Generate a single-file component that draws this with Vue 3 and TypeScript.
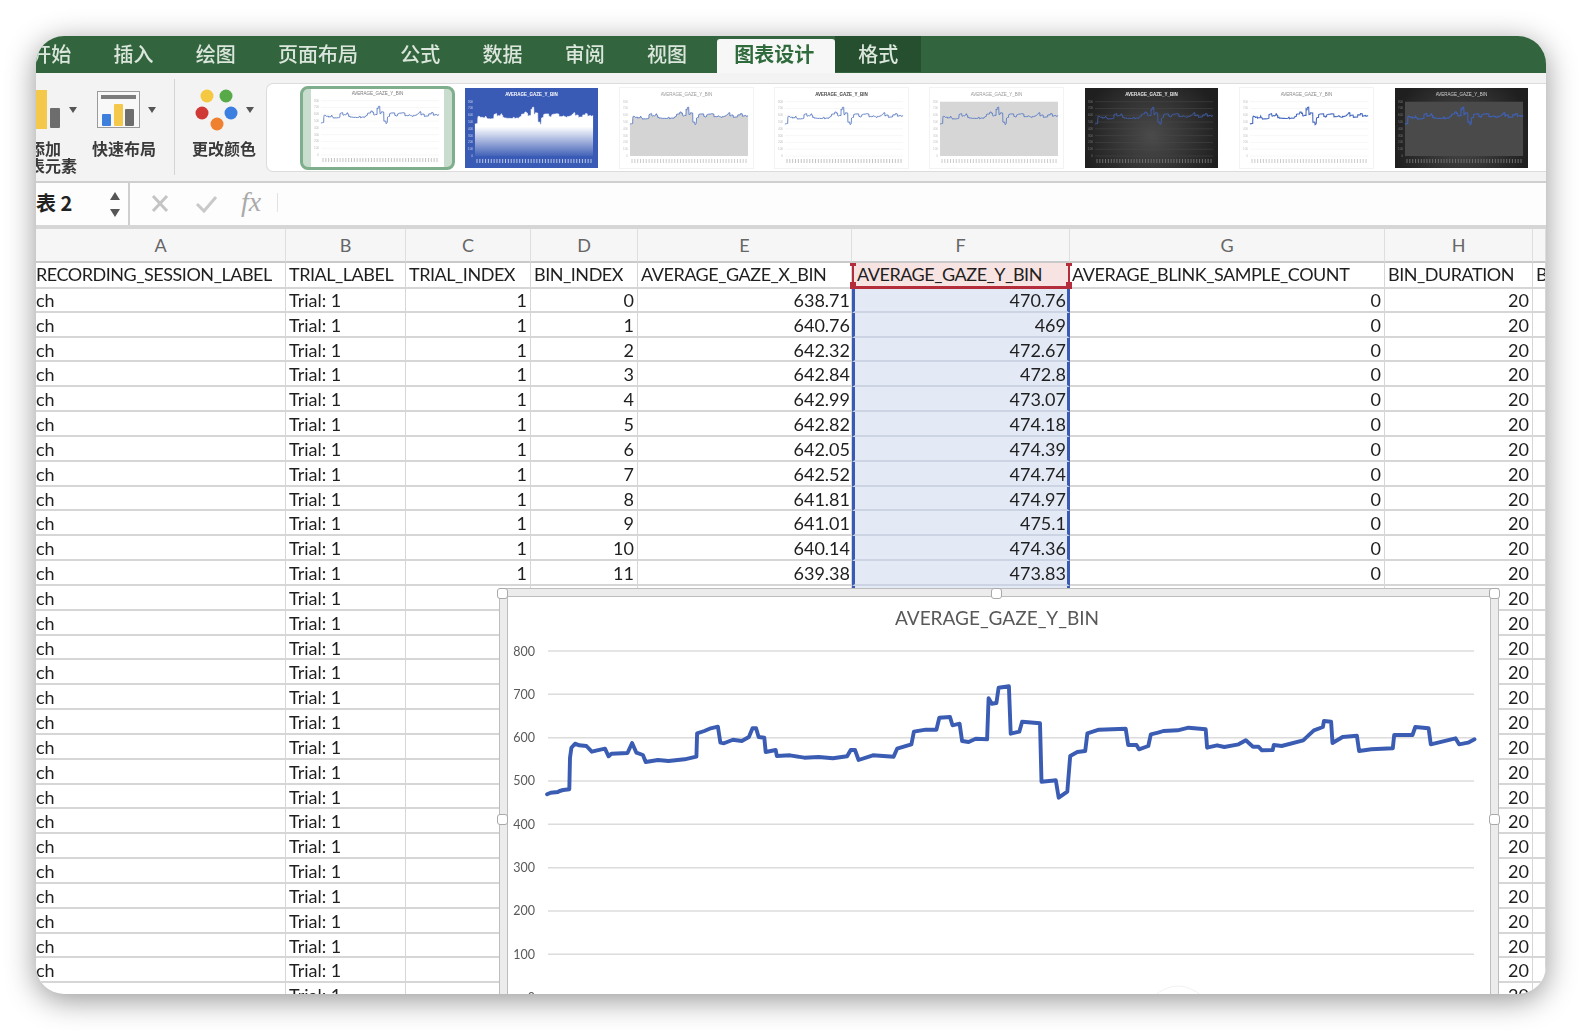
<script setup lang="ts">
type Pt = [number, number]

const tabs = ['开始', '插入', '绘图', '页面布局', '公式', '数据', '审阅', '视图']

const left: Pt[] = [[160,670],[170,665],[190,663],[195,660],[205,657],[222,655],[224,560],[228,530],[238,518],[250,523],[270,525],[285,542],[300,538],[322,533],[332,556],[340,548],[385,546],[398,516],[410,545],[428,552],[436,573],[470,567],[500,570],[545,565],[578,557],[580,487],[600,480],[615,473],[638,467],[645,515],[655,517],[680,506],[705,510],[725,498],[735,472],[745,472],[752,498],[768,500],[772,543],[800,537],[803,555],[840,553],[880,560],[920,558],[960,562],[1000,556],[1010,537],[1022,537],[1032,567],[1072,553],[1130,557],[1140,533],[1180,520],[1187,482],[1220,476],[1250,476],[1258,440],[1288,438],[1295,463],[1315,458],[1322,510],[1340,513],[1360,503],[1392,505],[1396,382],[1405,398],[1418,396],[1424,350],[1453,346],[1458,488],[1482,482],[1490,452],[1540,457]]
const right: Pt[] = [[60,632],[100,628],[108,680],[132,662],[140,555],[160,543],[182,540],[188,487],[220,476],[295,473],[302,522],[325,522],[332,535],[358,525],[365,490],[385,485],[400,480],[440,478],[470,470],[518,475],[522,530],[550,523],[570,528],[610,520],[630,508],[650,527],[665,527],[675,538],[705,537],[708,522],[730,525],[790,508],[820,478],[845,468],[848,450],[868,452],[872,516],[900,498],[940,494],[946,540],[980,535],[1040,532],[1044,492],[1095,492],[1103,468],[1140,472],[1146,520],[1215,502],[1225,520],[1250,515],[1268,505]]

// Page coordinates of the series
const series: Pt[] = [
  ...left.map(([x, y]): Pt => [490 + x / 2.8, 570 + y / 3]),
  ...right.map(([x, y]): Pt => [1020 + x / 2.79, 570 + y / 3]),
]
const toStr = (p: Pt[]) => p.map(([x, y]) => `${x.toFixed(1)},${y.toFixed(1)}`).join(' ')

const chartLine = toStr(series.map(([x, y]): Pt => [x - 507, y - 595]))
const thumbPts: Pt[] = series.map(([x, y]): Pt => [10 + ((x - 548) / 926) * 118, 13.7 + ((y - 650) / 346.7) * 54.3])
const thumbLine = toStr(thumbPts)
const thumbArea = `10,68 ${thumbLine} 128,68`

const axis = [800, 700, 600, 500, 400, 300, 200, 100, 0]
const axisY = (v: number) => 650 + ((800 - v) / 100) * 43.33 - 595
const thumbY = (v: number) => 13.7 + ((800 - v) / 800) * 54.3
const ticks = Array.from({ length: 41 }, (_, i) => 12 + i * 2.85)

interface Thumb {
  cls: string
  title: string
  weight: number
  text: string
  grid: string
  line: string
  lineW: number
  area?: string
  plot?: string
}
const thumbs: Thumb[] = [
  { cls: 'th-sel', title: '#777', weight: 400, text: '#bbb', grid: '#eee', line: '#5b7cc4', lineW: 0.9 },
  { cls: 'th-blue', title: '#fff', weight: 700, text: '#c9d4f0', grid: 'transparent', line: '#fff', lineW: 0.6, area: 'url(#fade)' },
  { cls: 'th-plain', title: '#999', weight: 400, text: '#c4c4c4', grid: 'transparent', line: '#5b7cc4', lineW: 0.9, area: '#d4d4d4' },
  { cls: 'th-plain', title: '#444', weight: 700, text: '#bbb', grid: '#eee', line: '#5b7cc4', lineW: 0.9 },
  { cls: 'th-plain', title: '#999', weight: 400, text: '#c4c4c4', grid: 'transparent', line: '#5b7cc4', lineW: 0.9, plot: '#d6d6d6' },
  { cls: 'th-dark', title: '#e8e8e8', weight: 700, text: '#777', grid: '#4a4a4a', line: '#3f5fb0', lineW: 0.9 },
  { cls: 'th-plain', title: '#888', weight: 400, text: '#c4c4c4', grid: '#eee', line: '#4a6cc0', lineW: 1.1 },
  { cls: 'th-dark', title: '#cfcfcf', weight: 400, text: '#777', grid: 'transparent', line: '#3f5fb0', lineW: 1.2, plot: '#4a4a4a' },
]

const columns = ['A', 'B', 'C', 'D', 'E', 'F', 'G', 'H', '']
const headers = ['RECORDING_SESSION_LABEL', 'TRIAL_LABEL', 'TRIAL_INDEX', 'BIN_INDEX', 'AVERAGE_GAZE_X_BIN', 'AVERAGE_GAZE_Y_BIN', 'AVERAGE_BLINK_SAMPLE_COUNT', 'BIN_DURATION', 'BIN_START']
const xVals = ['638.71', '640.76', '642.32', '642.84', '642.99', '642.82', '642.05', '642.52', '641.81', '641.01', '640.14', '639.38']
const yVals = ['470.76', '469', '472.67', '472.8', '473.07', '474.18', '474.39', '474.74', '474.97', '475.1', '474.36', '473.83']
const rows = Array.from({ length: 29 }, (_, i) => {
  const known = i < 12
  return [
    'ch',
    'Trial: 1',
    known ? '1' : '',
    known ? String(i) : '',
    known ? xVals[i] : '',
    known ? yVals[i] : '',
    known ? '0' : '',
    '20',
    '',
  ]
})
const colClass = (c: number) => `c${c}`
</script>

<template>
  <div class="page">
    <div class="win">
      <nav class="tabs">
        <span v-for="t in tabs" :key="t" class="tab">{{ t }}</span>
        <span class="tab active">图表设计</span>
        <span class="tab format">格式</span>
      </nav>

      <section class="ribbon">
        <div class="rb add">
          <svg class="rb-icon" width="64" height="44" viewBox="0 0 64 44">
            <rect x="-6" y="3" width="17" height="39" fill="#f4c84a" />
            <rect x="14" y="21" width="10" height="20" rx="1" fill="#6d6d6d" />
            <polygon points="33,20 41,20 37,26" fill="#555" />
          </svg>
          <span class="rb-label">添加<br />图表元素</span>
        </div>
        <div class="rb quick">
          <svg class="rb-icon" width="66" height="44" viewBox="0 0 66 44">
            <rect x="5.5" y="4.5" width="42" height="36" fill="#f8f8f8" stroke="#9a9a9a" />
            <rect x="9" y="8" width="35" height="4" fill="#7c7c7c" />
            <rect x="10" y="27" width="9" height="12" rx="1" fill="#3f7fdc" />
            <rect x="22" y="17" width="9" height="22" rx="1" fill="#f4c84a" />
            <rect x="33" y="22" width="9" height="17" rx="1" fill="#6d6d6d" />
            <polygon points="56,20 64,20 60,26" fill="#555" />
          </svg>
          <span class="rb-label">快速布局</span>
        </div>
        <div class="divider"></div>
        <div class="rb colors">
          <svg class="rb-icon" width="66" height="44" viewBox="0 0 66 44">
            <circle cx="16" cy="9" r="6.5" fill="#f5c842" />
            <circle cx="35" cy="9" r="6.5" fill="#58a948" />
            <circle cx="11" cy="26" r="6.5" fill="#cf3a37" />
            <circle cx="40" cy="26" r="6.5" fill="#3b7fe0" />
            <circle cx="26" cy="37" r="6.5" fill="#ee8030" />
            <polygon points="55,20 63,20 59,26" fill="#555" />
          </svg>
          <span class="rb-label">更改颜色</span>
        </div>

        <div class="gallery">
          <div v-for="(t, i) in thumbs" :key="i" class="thumb" :class="t.cls">
            <svg class="th-svg" width="133" height="80" viewBox="0 0 133 80">
              <defs v-if="i === 1">
                <linearGradient id="fade" x1="0" y1="0" x2="0" y2="1">
                  <stop offset="0.4" stop-color="#fff" />
                  <stop offset="1" stop-color="#fff" stop-opacity="0.05" />
                </linearGradient>
              </defs>
              <text x="66.5" y="8" class="th-title" :fill="t.title" :font-weight="t.weight">AVERAGE_GAZE_Y_BIN</text>
              <rect v-if="t.plot" x="10" y="13.7" width="118" height="54.3" :fill="t.plot" />
              <template v-for="v in axis" :key="v">
                <line x1="10" x2="128" :y1="thumbY(v)" :y2="thumbY(v)" :stroke="t.grid" stroke-width="0.5" />
                <text x="8" :y="thumbY(v) + 1" class="th-axis" :fill="t.text">{{ v }}</text>
              </template>
              <polygon v-if="t.area" :points="thumbArea" :fill="t.area" />
              <polyline :points="thumbLine" fill="none" :stroke="t.line" :stroke-width="t.lineW" />
              <line v-for="x in ticks" :key="x" :x1="x" :x2="x" y1="71" y2="75" :stroke="t.text" stroke-width="0.9" />
            </svg>
          </div>
        </div>
      </section>

      <section class="formula">
        <div class="namebox">
          <span>表 2</span>
          <svg class="spin" width="12" height="26" viewBox="0 0 12 26">
            <polygon points="6,0 11,8 1,8" fill="#555" />
            <polygon points="1,17 11,17 6,25" fill="#555" />
          </svg>
        </div>
        <svg class="fx-icons" width="150" height="40" viewBox="0 0 150 40">
          <path d="M22 13 L36 28 M36 13 L22 28" stroke="#c4c4c4" stroke-width="3" fill="none" />
          <path d="M66 21 L73 28 L85 14" stroke="#c9c9c9" stroke-width="3" fill="none" />
          <text x="110" y="28" class="fx">fx</text>
          <line x1="146.5" x2="146.5" y1="10" y2="29" stroke="#e2e2e2" />
        </svg>
      </section>

      <section class="sheet">
        <div class="row colhead">
          <div v-for="(c, i) in columns" :key="i" class="cell" :class="colClass(i)">{{ c }}</div>
        </div>
        <div class="row titles">
          <div v-for="(h, i) in headers" :key="h" class="cell" :class="colClass(i)">
            {{ h }}
            <template v-if="i === 5">
              <span class="mark mark-l"></span>
              <span class="mark mark-r"></span>
            </template>
          </div>
        </div>
        <div v-for="(r, ri) in rows" :key="ri" class="row data">
          <div v-for="(v, i) in r" :key="i" class="cell" :class="colClass(i)">{{ v }}</div>
        </div>

        <div class="chart">
          <svg class="plot" width="985" height="400" viewBox="0 0 985 400">
            <text x="490" y="29" class="chart-title">AVERAGE_GAZE_Y_BIN</text>
            <template v-for="v in axis" :key="v">
              <line v-if="v > 0" x1="41" x2="967" :y1="axisY(v)" :y2="axisY(v)" stroke="#dcdcdc" stroke-width="1.5" />
              <text x="28" :y="axisY(v) + 4.5" class="chart-axis">{{ v }}</text>
            </template>
            <polyline :points="chartLine" fill="none" stroke="#3a5cb2" stroke-width="3.9" stroke-linejoin="round" stroke-linecap="round" />
            <path d="M647 400 Q671 380 695 400" fill="none" stroke="#f2f2f2" />
          </svg>
          <i class="handle h-tl"></i>
          <i class="handle h-tm"></i>
          <i class="handle h-tr"></i>
          <i class="handle h-ml"></i>
          <i class="handle h-mr"></i>
        </div>
      </section>
    </div>
  </div>
</template>

<style>
html, body { margin: 0; background: #fff; }
</style>

<style scoped>
.page {
  width: 1582px;
  height: 1030px;
  padding: 36px;
  box-sizing: border-box;
  background: #fff;
  overflow: hidden;
  font-family: "Lato", "Noto Sans CJK SC", sans-serif;
}
.win {
  width: 1510px;
  height: 958px;
  border-radius: 28px;
  overflow: hidden;
  background: #fff;
  box-shadow: 0 6px 30px rgba(0, 0, 0, 0.42);
  display: flex;
  flex-direction: column;
  filter: blur(0.35px);
}

/* tabs */
.tabs {
  height: 37px;
  flex: none;
  display: flex;
  background: #32653d;
  font-family: "Noto Sans CJK SC", sans-serif;
  font-size: 20px;
  font-weight: 500;
  color: #dbe6dc;
}
.tab {
  padding: 0 21.15px;
  line-height: 35px;
  white-space: nowrap;
}
.tab:first-child { margin-left: -26px; }
.tab.active {
  margin-top: 3px;
  margin-left: 9px;
  padding: 0 21px 0 17px;
  line-height: 30px;
  background: #f7f7f7;
  color: #2f6b3c;
  font-weight: 700;
  border-radius: 3px 3px 0 0;
}
.tab.format {
  padding: 0 23px;
  background: #264f2f;
  height: 36px;
}

/* ribbon */
.ribbon {
  height: 110px;
  flex: none;
  box-sizing: border-box;
  display: flex;
  align-items: flex-start;
  background: #f3f3f3;
  border-bottom: 2px solid #cfcfcf;
  font-family: "Noto Sans CJK SC", sans-serif;
}
.rb {
  width: 64px;
  padding-top: 14px;
  display: flex;
  flex-direction: column;
  flex: none;
  color: #333;
}
.rb.add { margin-left: -23px; }
.rb.quick { margin-left: 15px; }
.rb-icon { display: block; flex: none; }
.add .rb-icon { margin-left: 23px; }
.rb-label {
  margin-top: 8px;
  font-size: 16px;
  font-weight: 700;
  line-height: 19px;
  text-align: center;
  white-space: nowrap;
  color: #3a3a3a;
}
.add .rb-label { line-height: 17px; margin-top: 9px; }
.divider {
  width: 1px;
  height: 96px;
  margin: 6px 16px 0 18px;
  background: #d4d4d4;
  flex: none;
}
.colors { width: 66px; }
.gallery {
  flex: 1;
  margin: 10px 0 0 9px;
  height: 89px;
  box-sizing: border-box;
  padding-left: 33px;
  background: #fff;
  border: 1px solid #dcdcdc;
  border-right: 0;
  border-radius: 7px 0 0 7px;
  display: flex;
  align-items: center;
  gap: 22px;
  overflow: hidden;
}
.thumb { flex: none; width: 133px; height: 80px; overflow: hidden; }
.th-svg { display: block; filter: blur(0.3px); }
.th-sel {
  width: 155px;
  height: 84px;
  box-sizing: border-box;
  border: 3px solid #7fae8d;
  border-radius: 8px;
  background: #c9ddcf;
  padding: 0 8px;
  margin-right: -12px;
}
.th-sel .th-svg { background: #fff; margin-top: -2px; }
.th-blue { background: #3a5bb5; }
.th-plain { outline: 1px solid #f3f3f3; }
.th-dark { background: radial-gradient(circle at 50% 60%, #4b4b4b, #1f1f1f 85%); }
.th-title {
  font-family: "Liberation Sans", sans-serif;
  font-size: 4.5px;
  text-anchor: middle;
}
.th-axis {
  font-family: "Liberation Sans", sans-serif;
  font-size: 3px;
  text-anchor: end;
}

/* formula bar */
.formula {
  height: 42px;
  flex: none;
  display: flex;
  background: #fdfdfd;
  border-bottom: 4px solid #d6d6d6;
  box-sizing: content-box;
}
.namebox {
  width: 94px;
  flex: none;
  box-sizing: border-box;
  border-right: 2px solid #cfcfcf;
  display: flex;
  align-items: center;
  justify-content: space-between;
  padding: 0 7px 0 0;
  font-family: "Noto Sans CJK SC", sans-serif;
  font-size: 20px;
  font-weight: 700;
  color: #222;
}
.namebox span { margin-top: -4px; }
.spin { margin-top: 1px; }
.fx-icons { display: block; margin-left: 1px; }
.fx {
  font-family: "Liberation Serif", serif;
  font-style: italic;
  font-size: 28px;
  fill: #aaa;
}

/* sheet */
.sheet {
  position: relative;
  flex: 1;
  min-height: 0;
  overflow: hidden;
  font-size: 18px;
  color: #1f1f1f;
}
.row {
  display: grid;
  grid-template-columns: 250px 120px 125px 107px 214px 218px 315px 148px 13px;
}
.colhead { height: 34px; background: #f6f6f6; color: #666; }
.colhead .cell {
  text-align: center;
  padding: 0;
  line-height: 32px;
  border-right: 1px solid #dedede;
  border-bottom: 2px solid #c9c9c9;
}
.titles { height: 25px; letter-spacing: -0.47px; }
.titles .cell { line-height: 23px; }
.data { height: 24.84px; }
.cell {
  box-sizing: border-box;
  min-width: 0;
  overflow: hidden;
  white-space: nowrap;
  padding: 0 3px;
  line-height: 24px;
  border-right: 1px solid #d6d6d6;
  border-bottom: 2px solid #d6d6d6;
}
.c0 { padding-left: 0; }
.data .c2, .data .c3, .data .c4, .data .c5, .data .c6, .data .c7 { text-align: right; }
.data .c4 { padding-right: 1px; }
.data .c5 {
  background: #e3e9f5;
  border-left: 3px solid #3a5bb5;
  border-right: 3px solid #3a5bb5;
  border-bottom-color: #ccd3e2;
  padding: 0 1px;
}
.titles .c5 {
  position: relative;
  overflow: visible;
  background: #f8e3e3;
  border-right: 0;
  border-bottom: 3px solid #b32d3a;
  padding-left: 5px;
}
.titles .c6 { padding-left: 2px; }
.mark {
  position: absolute;
  top: 3px;
  bottom: 2px;
  width: 2px;
  background: #b32d3a;
}
.mark::before, .mark::after {
  content: "";
  position: absolute;
  left: -2px;
  width: 6px;
  background: #b32d3a;
}
.mark::before { top: -3px; height: 3px; }
.mark::after { bottom: -5px; height: 7px; }
.mark-l { left: 0; }
.mark-r { right: 0; }

.chart {
  position: absolute;
  left: 464px;
  top: 360px;
  width: 984px;
  height: 400px;
  background: #fff;
  border: 7px solid #ececec;
  box-shadow: inset 0 0 0 1px #bdbdbd, 0 0 0 1px #bdbdbd;
}
.plot { display: block; font-family: "Lato", sans-serif; }
.chart-title {
  font-size: 19px;
  fill: #595959;
  text-anchor: middle;
}
.chart-axis {
  font-size: 12.5px;
  fill: #595959;
  text-anchor: end;
}
.handle {
  position: absolute;
  width: 11px;
  height: 11px;
  box-sizing: border-box;
  background: #fff;
  border: 1px solid #a9a9a9;
  border-radius: 3px;
}
.h-tl { left: -10px; top: -8px; }
.h-tm { left: 484px; top: -8px; }
.h-tr { left: 982px; top: -8px; }
.h-ml { left: -10px; top: 218px; }
.h-mr { left: 982px; top: 218px; }
</style>
